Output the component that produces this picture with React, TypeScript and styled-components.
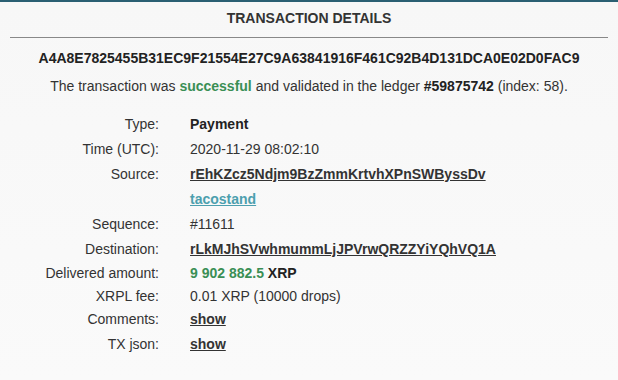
import React from "react";
import styled, { createGlobalStyle } from "styled-components";

const GlobalStyle = createGlobalStyle`
  html, body {
    margin: 0;
    padding: 0;
    background: #f7f7f7;
  }
  body {
    font-family: "Liberation Sans", Arial, sans-serif;
    color: #333;
  }
`;

const Page = styled.div`
  width: 618px;
  height: 380px;
  border-top: 2px solid #2a5f72;
  box-sizing: border-box;
  background: linear-gradient(#f7f7f7, #fafafa);
  padding: 0 10px;
  overflow: hidden;
`;

const Title = styled.h1`
  margin: 0;
  height: 35px;
  line-height: 33px;
  text-align: center;
  font-size: 14px;
  font-weight: bold;
  color: #333;
  border-bottom: 1px solid #888;
`;

const Hash = styled.div`
  margin-top: 10px;
  text-align: center;
  font-size: 14px;
  font-weight: bold;
  color: #222;
  line-height: 20px;
`;

const Summary = styled.p`
  margin: 8px 0 0;
  text-align: center;
  font-size: 14px;
  line-height: 20px;
`;

const Strong = styled.b<{ $green?: boolean }>`
  color: ${(p) => (p.$green ? "#3a8f55" : "#222")};
`;

const Details = styled.div`
  margin-top: 16px;
  display: grid;
  grid-template-columns: 149px 1fr;
  column-gap: 31px;
  font-size: 14px;
`;

const Label = styled.div<{ $h?: number }>`
  text-align: right;
  line-height: ${(p) => p.$h ?? 25}px;
  color: #333;
`;

const Value = styled.div<{ $h?: number }>`
  line-height: ${(p) => p.$h ?? 25}px;
  color: #333;
`;

const Link = styled.a<{ $teal?: boolean }>`
  font-weight: bold;
  text-decoration: underline;
  color: ${(p) => (p.$teal ? "#4c9fae" : "#333")};
  cursor: pointer;
`;

const rows: { label: string; value: React.ReactNode; h?: number }[] = [
  { label: "Type:", value: <Strong>Payment</Strong> },
  { label: "Time (UTC):", value: "2020-11-29 08:02:10" },
  { label: "Source:", value: <Link>rEhKZcz5Ndjm9BzZmmKrtvhXPnSWByssDv</Link> },
  { label: "", value: <Link $teal>tacostand</Link> },
  { label: "Sequence:", value: "#11611" },
  { label: "Destination:", value: <Link>rLkMJhSVwhmummLjJPVrwQRZZYiYQhVQ1A</Link> },
  {
    label: "Delivered amount:",
    value: (
      <>
        <Strong $green>9 902 882.5</Strong> <Strong>XRP</Strong>
      </>
    ),
    h: 23,
  },
  { label: "XRPL fee:", value: "0.01 XRP (10000 drops)", h: 22 },
  { label: "Comments:", value: <Link>show</Link> },
  { label: "TX json:", value: <Link>show</Link> },
];

export default function App() {
  return (
    <Page>
      <GlobalStyle />
      <Title>TRANSACTION DETAILS</Title>
      <Hash>A4A8E7825455B31EC9F21554E27C9A63841916F461C92B4D131DCA0E02D0FAC9</Hash>
      <Summary>
        The transaction was <Strong $green>successful</Strong> and validated in the ledger{" "}
        <Strong>#59875742</Strong> (index: 58).
      </Summary>
      <Details>
        {rows.map((r, i) => (
          <React.Fragment key={i}>
            <Label $h={r.h}>{r.label}</Label>
            <Value $h={r.h}>{r.value}</Value>
          </React.Fragment>
        ))}
      </Details>
    </Page>
  );
}
